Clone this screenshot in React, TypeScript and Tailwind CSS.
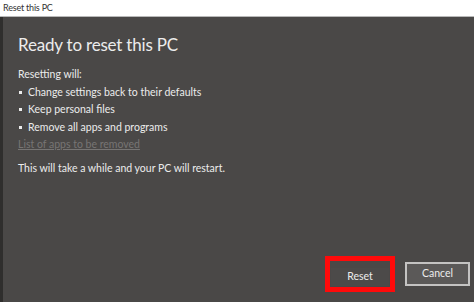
export default function App() {
  const items = [
    "Change settings back to their defaults",
    "Keep personal files",
    "Remove all apps and programs",
  ]

  return (
    <div className="flex h-[302px] w-[474px] flex-col overflow-hidden font-['Lato',sans-serif]">
      {/* window title bar */}
      <div className="flex h-[17px] items-center border-b border-[#b9b9b9] bg-white pl-[3px] text-[9px] tracking-[-0.2px] text-[#333]">
        Reset this PC
      </div>

      <div className="flex flex-1 flex-col border-l-[3px] border-[#2f2e2d] bg-[#4a4847] pl-[15px] pr-[4px] text-[#ececec]">
        <h1 className="mt-[17px] text-[17px] leading-[22px] tracking-[-0.2px]">Ready to reset this PC</h1>

        <div className="mt-[10px] text-[10.5px] leading-[17.5px]">
          <p>Resetting will:</p>
          <ul>
            {items.map((item) => (
              <li key={item} className="flex items-center">
                <span className="mr-[6px] ml-[1px] h-[3px] w-[3px] bg-[#ececec]"></span>
                {item}
              </li>
            ))}
          </ul>
          <p className="text-[#777574] underline">List of apps to be removed</p>
          <p className="mt-[6px]">This will take a while and your PC will restart.</p>
        </div>

        {/* buttons */}
        <div className="mt-auto mb-[10px] flex items-center justify-end gap-[10px]">
          <div className="border-[5px] border-[#ff0a0a] p-[1px]">
            <button className="h-[18px] w-[58px] bg-[#4c4a49] text-[10.5px] text-[#ececec]">Reset</button>
          </div>
          <button className="h-[24px] w-[65px] border-2 border-[#c4c3c2] bg-[#5b5958] text-[10.5px] text-[#ececec]">
            Cancel
          </button>
        </div>
      </div>
    </div>
  )
}
